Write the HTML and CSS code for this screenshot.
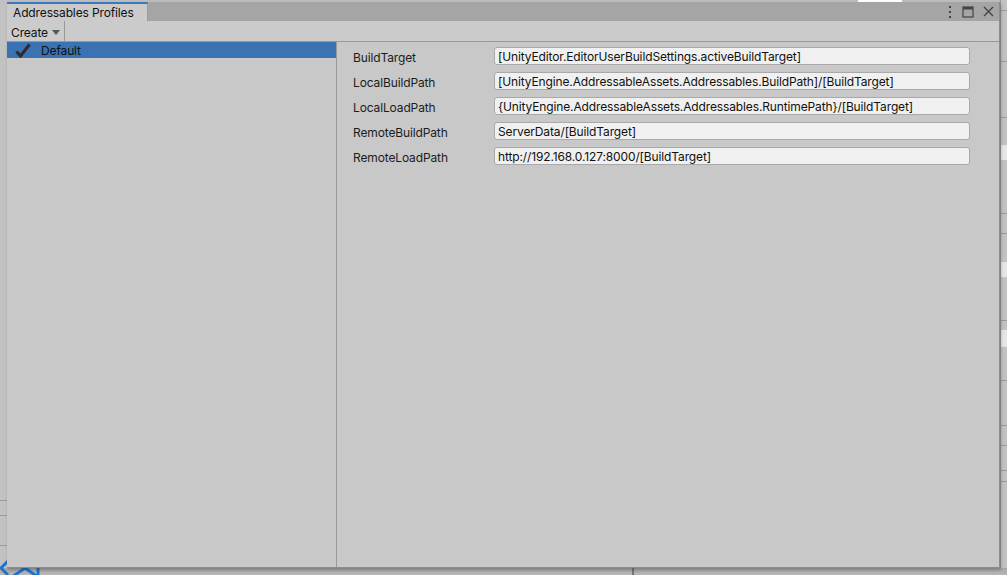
FILE: index.html
```html
<!DOCTYPE html>
<html lang="en">
<head>
  <meta charset="UTF-8" />
  <title>Addressables Profiles</title>
  <link rel="stylesheet" href="styles.css">
</head>
<body>
  <div class="editor">
    <div class="strip-left"></div>
    <div class="strip-right"></div>
    <div class="strip-bottom"></div>
    <div class="top-patch"></div>
    <svg class="gizmo" width="42" height="20" viewBox="0 0 42 20">
      <polyline points="8,4 1,11 8,18" fill="none" stroke="#1f72d1" stroke-width="3" />
      <polyline points="12,20 25,11 38,20" fill="none" stroke="#1f72d1" stroke-width="3" />
      <line x1="38" y1="11" x2="38" y2="20" stroke="#1f72d1" stroke-width="3" />
    </svg>
  </div>

  <div class="window">
    <div class="tabbar">
      <div class="tab">Addressables Profiles</div>
      <div class="win-buttons">
        <svg width="6" height="14" viewBox="0 0 6 14">
          <rect x="2" y="1" width="2" height="2" fill="#444" />
          <rect x="2" y="6" width="2" height="2" fill="#444" />
          <rect x="2" y="11" width="2" height="2" fill="#444" />
        </svg>
        <svg width="12" height="12" viewBox="0 0 12 12">
          <rect x="1" y="1" width="10" height="10" fill="none" stroke="#444" stroke-width="1.2" />
          <rect x="1" y="1" width="10" height="2.5" fill="#444" />
        </svg>
        <svg width="11" height="11" viewBox="0 0 11 11">
          <path d="M1 1 L10 10 M10 1 L1 10" stroke="#444" stroke-width="1.4" />
        </svg>
      </div>
    </div>

    <div class="toolbar">
      <div class="create">Create <span class="caret"></span></div>
    </div>

    <div class="content">
      <div class="profiles">
        <div class="profile selected">
          <svg class="check" width="16" height="15" viewBox="0 0 16 15">
            <path d="M1.5 8.5 L5.5 13 L14.5 1.5" fill="none" stroke="#2b2b2b" stroke-width="3" />
          </svg>
          <span>Default</span>
        </div>
      </div>
      <div class="variables">
        <div class="var-row">
          <label>BuildTarget</label>
          <div class="field">[UnityEditor.EditorUserBuildSettings.activeBuildTarget]</div>
        </div>
        <div class="var-row">
          <label>LocalBuildPath</label>
          <div class="field">[UnityEngine.AddressableAssets.Addressables.BuildPath]/[BuildTarget]</div>
        </div>
        <div class="var-row">
          <label>LocalLoadPath</label>
          <div class="field">{UnityEngine.AddressableAssets.Addressables.RuntimePath}/[BuildTarget]</div>
        </div>
        <div class="var-row">
          <label>RemoteBuildPath</label>
          <div class="field">ServerData/[BuildTarget]</div>
        </div>
        <div class="var-row">
          <label>RemoteLoadPath</label>
          <div class="field">http://192.168.0.127:8000/[BuildTarget]</div>
        </div>
      </div>
    </div>
  </div>
</body>
</html>
```

FILE: styles.css
```css
body {
  margin: 0;
  width: 1007px;
  height: 575px;
  overflow: hidden;
  position: relative;
  background: #bdbdbd;
  font-family: Inter, "Noto Sans", sans-serif;
  font-size: 12px;
  letter-spacing: -0.13px;
  color: #111;
}

/* editor behind the floating window */
.editor {
  position: absolute;
  inset: 0;
}
.strip-left {
  position: absolute;
  left: 0;
  top: 0;
  width: 7px;
  height: 575px;
  background:
    linear-gradient(#999, #999) 0 500px / 7px 1px no-repeat,
    linear-gradient(#999, #999) 0 515px / 7px 1px no-repeat,
    linear-gradient(#999, #999) 0 545px / 7px 1px no-repeat,
    #c2c2c2;
}
.strip-right {
  position: absolute;
  left: 1000px;
  top: 0;
  width: 7px;
  height: 575px;
  border-left: 1px solid #9a9a9a;
  background:
    linear-gradient(#9a9a9a, #9a9a9a) 0 10px / 7px 1px no-repeat,
    linear-gradient(#9a9a9a, #9a9a9a) 0 61px / 7px 1px no-repeat,
    linear-gradient(#9a9a9a, #9a9a9a) 0 117px / 7px 1px no-repeat,
    linear-gradient(#e6e6e6, #e6e6e6) 0 145px / 7px 15px no-repeat,
    linear-gradient(#9a9a9a, #9a9a9a) 0 213px / 7px 1px no-repeat,
    linear-gradient(#9a9a9a, #9a9a9a) 0 233px / 7px 1px no-repeat,
    linear-gradient(#e6e6e6, #e6e6e6) 0 262px / 7px 15px no-repeat,
    linear-gradient(#9a9a9a, #9a9a9a) 0 320px / 7px 1px no-repeat,
    linear-gradient(#e6e6e6, #e6e6e6) 0 330px / 7px 17px no-repeat,
    linear-gradient(#9a9a9a, #9a9a9a) 0 380px / 7px 1px no-repeat,
    linear-gradient(#9a9a9a, #9a9a9a) 0 425px / 7px 1px no-repeat,
    linear-gradient(#9a9a9a, #9a9a9a) 0 445px / 7px 1px no-repeat,
    linear-gradient(#9a9a9a, #9a9a9a) 0 470px / 7px 1px no-repeat,
    linear-gradient(#9a9a9a, #9a9a9a) 0 481px / 7px 1px no-repeat,
    #c2c2c2;
}
.strip-bottom {
  position: absolute;
  left: 0;
  top: 568px;
  width: 1007px;
  height: 7px;
  background:
    linear-gradient(#777, #777) 632px 0 / 2px 7px no-repeat,
    linear-gradient(#a6a6a6, #b8b8b8);
}
.top-patch {
  position: absolute;
  left: 858px;
  top: 0;
  width: 44px;
  height: 2px;
  background: #fff;
}
.gizmo {
  position: absolute;
  left: 0;
  top: 557px;
}

/* floating window */
.window {
  position: absolute;
  left: 7px;
  top: 2px;
  width: 992px;
  height: 565px;
  display: flex;
  flex-direction: column;
  background: #c8c8c8;
  border-right: 1px solid #8c8c8c;
  border-bottom: 1px solid #8c8c8c;
  box-shadow: 1px 2px 3px rgba(0, 0, 0, 0.25);
}
.tabbar {
  height: 19px;
  display: flex;
  justify-content: space-between;
  align-items: flex-end;
  background: #a5a5a5;
}
.tab {
  height: 17px;
  width: 134px;
  padding-left: 6px;
  border-top: 2px solid #3a79bb;
  border-right: 1px solid #9b9b9b;
  background: #cbcbcb;
  color: #101010;
  line-height: 17px;
}
.win-buttons {
  display: flex;
  align-items: center;
  gap: 9px;
  height: 19px;
  padding-right: 5px;
}

.toolbar {
  height: 20px;
  display: flex;
  background: #cbcbcb;
  border-bottom: 1px solid #999;
}
.create {
  display: flex;
  align-items: center;
  gap: 4px;
  padding: 2px 4px 0;
  border-right: 1px solid #999;
  color: #111;
}
.caret {
  width: 0;
  height: 0;
  border-left: 4px solid transparent;
  border-right: 4px solid transparent;
  border-top: 5px solid #555;
}

.content {
  flex: 1;
  display: flex;
}
.profiles {
  width: 329px;
  border-right: 1px solid #999;
  background: #c8c8c8;
}
.profile {
  height: 16px;
  display: flex;
  align-items: center;
}
.profile.selected {
  background: #3b72b1;
}
.check {
  margin-left: 8px;
  margin-right: 10px;
}
.variables {
  flex: 1;
  padding: 5px 0 0 16px;
}
.var-row {
  height: 25px;
  display: flex;
}
.var-row label {
  width: 141px;
  padding-top: 2px;
  line-height: 18px;
  color: #1c1c1c;
}
.field {
  width: 471px;
  height: 16px;
  padding-left: 3px;
  border: 1px solid #a9a9a9;
  border-radius: 3px;
  background: #f0f0f0;
  line-height: 17px;
  color: #111;
  white-space: nowrap;
  overflow: hidden;
}
```
